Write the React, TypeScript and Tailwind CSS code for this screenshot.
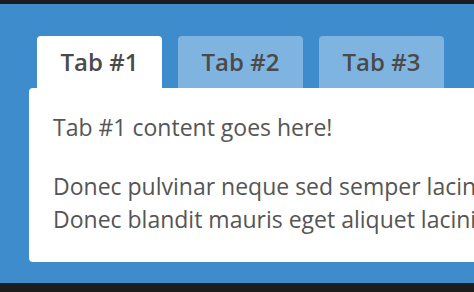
import { useState } from "react";

const tabs = [
  { id: 1, label: "Tab #1" },
  { id: 2, label: "Tab #2" },
  { id: 3, label: "Tab #3" },
];

export default function App() {
  const [active, setActive] = useState(1);

  return (
    <div className="h-[292px] w-[474px] overflow-hidden bg-[#1c1c1c] pt-[4px] pb-[9px] font-['Open_Sans',sans-serif]">
      <div className="h-full bg-[#3f8ccc] pt-[32px] pl-[29px]">
        <div className="ml-[8px] flex gap-[16px]">
          {tabs.map((t) => (
            <button
              key={t.id}
              onClick={() => setActive(t.id)}
              className={`h-[52px] w-[125px] shrink-0 rounded-t-[4px] text-[24px] font-semibold text-[#4a4a4a] ${
                active === t.id ? "bg-white" : "bg-[#80b4e0]"
              }`}
            >
              {t.label}
            </button>
          ))}
        </div>
        <div className="h-[174px] w-[460px] rounded-[4px] bg-white pt-[23px] pl-[24px] text-[23px] leading-[33px] whitespace-nowrap text-[#555555]">
          <p>Tab #{active} content goes here!</p>
          <p className="mt-[26px]">Donec pulvinar neque sed semper lacinia.</p>
          <p>Donec blandit mauris eget aliquet lacinia.</p>
        </div>
      </div>
    </div>
  );
}
